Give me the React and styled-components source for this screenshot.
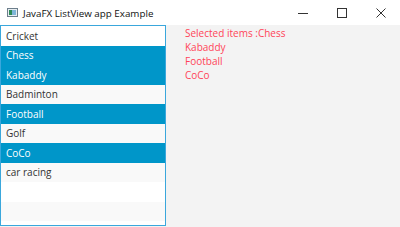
import React from 'react';
import styled, { createGlobalStyle } from 'styled-components';

const GlobalStyle = createGlobalStyle`
  html, body {
    margin: 0;
    padding: 0;
    background: #f3f3f3;
    font-family: 'Open Sans', 'Noto Sans', sans-serif;
  }
`;

const Window = styled.div`
  width: 400px;
  height: 227px;
  display: flex;
  flex-direction: column;
  background: #f3f3f3;
  overflow: hidden;
`;

const TitleBar = styled.div`
  height: 25px;
  display: flex;
  align-items: center;
  background: #fff;
  flex-shrink: 0;
`;

const AppIcon = styled.div`
  width: 22px;
  display: flex;
  justify-content: center;
  padding-left: 1px;
`;

const TitleText = styled.span`
  flex: 1;
  font-size: 9.8px;
  color: #111;
  padding-top: 1px;
`;

const Controls = styled.div`
  display: flex;
  height: 100%;
`;

const ControlButton = styled.div`
  width: 39px;
  display: flex;
  align-items: center;
  justify-content: center;
`;

const Body = styled.div`
  flex: 1;
  display: flex;
  align-items: flex-start;
`;

const List = styled.div`
  width: 164px;
  height: 199px;
  border: 1px solid #3aa7dc;
  background: #fff;
  display: flex;
  flex-direction: column;
  box-sizing: content-box;
`;

const Row = styled.div`
  height: 19.5px;
  display: flex;
  align-items: center;
  padding-left: 5px;
  font-size: 10px;
  color: ${(p) => (p.selected ? '#fff' : '#333')};
  background: ${(p) => (p.selected ? '#0096c9' : p.odd ? '#f9f9f9' : '#fff')};
`;

const Output = styled.div`
  padding: 1px 0 0 19px;
  display: flex;
  flex-direction: column;
`;

const OutputLine = styled.div`
  font-size: 10px;
  line-height: 14px;
  color: #ff4458;
`;

const items = [
  { name: 'Cricket' },
  { name: 'Chess', selected: true },
  { name: 'Kabaddy', selected: true },
  { name: 'Badminton' },
  { name: 'Football', selected: true },
  { name: 'Golf' },
  { name: 'CoCo', selected: true },
  { name: 'car racing' },
  { name: '' },
  { name: '' },
];

export default function App() {
  return (
    <>
      <GlobalStyle />
      <Window>
        <TitleBar>
          <AppIcon>
            <svg width="11" height="9" viewBox="0 0 11 9">
              <rect x="0.5" y="0.5" width="10" height="8" fill="#e8eef2" stroke="#6d7f8c" />
              <rect x="2" y="2" width="3" height="5" fill="#2e8b57" />
              <rect x="5" y="2" width="4" height="5" fill="#7fb6d8" />
            </svg>
          </AppIcon>
          <TitleText>JavaFX ListView app Example</TitleText>
          <Controls>
            <ControlButton>
              <svg width="10" height="10" viewBox="0 0 10 10">
                <line x1="0" y1="5.5" x2="10" y2="5.5" stroke="#333" strokeWidth="1" />
              </svg>
            </ControlButton>
            <ControlButton>
              <svg width="10" height="10" viewBox="0 0 10 10">
                <rect x="0.5" y="0.5" width="9" height="9" fill="none" stroke="#333" strokeWidth="1" />
              </svg>
            </ControlButton>
            <ControlButton>
              <svg width="10" height="10" viewBox="0 0 10 10">
                <path d="M0.5 0.5 L9.5 9.5 M9.5 0.5 L0.5 9.5" stroke="#333" strokeWidth="1" />
              </svg>
            </ControlButton>
          </Controls>
        </TitleBar>
        <Body>
          <List>
            {items.map((it, i) => (
              <Row key={i} selected={it.selected} odd={i % 2 === 1}>
                {it.name}
              </Row>
            ))}
          </List>
          <Output>
            <OutputLine>Selected items :Chess</OutputLine>
            <OutputLine>Kabaddy</OutputLine>
            <OutputLine>Football</OutputLine>
            <OutputLine>CoCo</OutputLine>
          </Output>
        </Body>
      </Window>
    </>
  );
}
